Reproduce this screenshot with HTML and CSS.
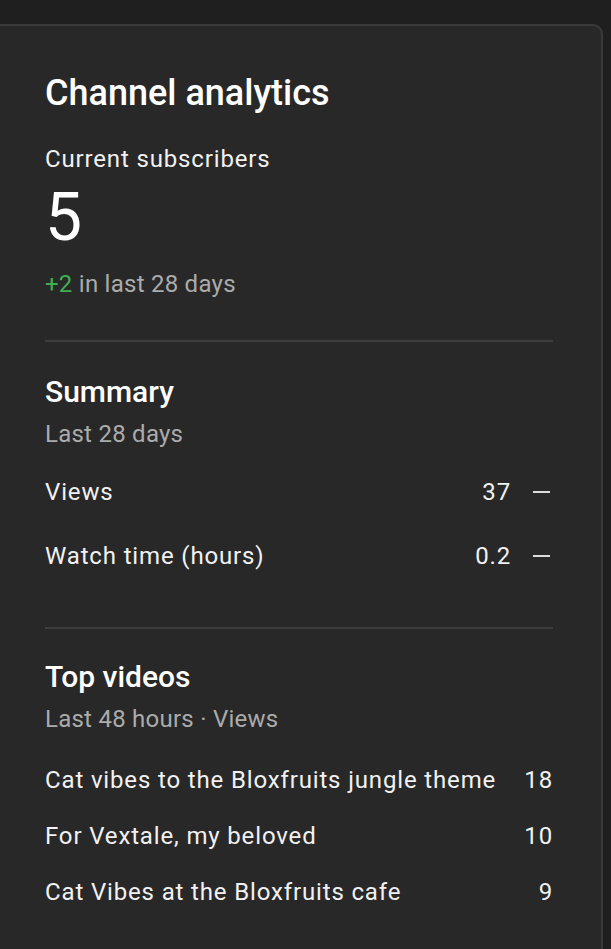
FILE: index.html
```html
<!DOCTYPE html>
<html lang="en">
<head>
  <meta charset="UTF-8" />
  <meta name="viewport" content="width=device-width, initial-scale=1.0"/>
  <title>Channel analytics</title>
  <link rel="stylesheet" href="styles.css">
</head>
<body>
  <div class="tarjeta">
    <h1>Channel analytics</h1>
    <div class="subs">
      <p class="etiqueta">Current subscribers</p>
      <p class="numero">5</p>
      <p class="gris"><span class="verde">+2</span> in last 28 days</p>
    </div>
    <hr>
    <div class="bloque">
      <h2>Summary</h2>
      <p class="gris sub">Last 28 days</p>
      <div class="metricas">
        <div class="fila"><span>Views</span><span class="valor">37<i class="tendencia"></i></span></div>
        <div class="fila"><span>Watch time (hours)</span><span class="valor">0.2<i class="tendencia"></i></span></div>
      </div>
    </div>
    <hr class="hr2">
    <div class="bloque">
      <h2>Top videos</h2>
      <p class="gris sub">Last 48 hours · Views</p>
      <div class="videos">
        <div class="fila"><span>Cat vibes to the Bloxfruits jungle theme</span><span>18</span></div>
        <div class="fila"><span>For Vextale, my beloved</span><span>10</span></div>
        <div class="fila"><span>Cat Vibes at the Bloxfruits cafe</span><span>9</span></div>
      </div>
    </div>
  </div>
</body>
</html>
```

FILE: styles.css
```css
body { margin: 0; background: #1f1f1f; font-family: Roboto, "Liberation Sans", Arial, sans-serif; color: #f1f1f1; }
p, h1, h2 { margin: 0; }
.tarjeta { margin: 24px 8px 0 -12px; padding: 45px 48px 60px 55px; background: #282828; border: 2px solid #3a3a3a; border-radius: 10px; min-height: 900px; box-sizing: border-box; }
h1 { font-size: 36px; line-height: 44px; font-weight: 500; color: #fff; }
h2 { font-size: 30px; line-height: 38px; font-weight: 500; color: #fff; }
.subs { margin-top: 28px; }
.etiqueta, .gris, .fila { font-size: 24px; line-height: 32px; letter-spacing: 0.85px; }
.numero { font-size: 66px; line-height: 72px; margin-top: 7px; color: #fff; }
.gris { color: #ababab; letter-spacing: 0.25px; }
.subs .gris { margin-top: 14px; }
.verde { color: #3fae52; }
hr { border: none; height: 2px; background: #3d3d3d; margin: 40px 0 0; }
.hr2 { margin-top: 55px; }
.bloque { margin-top: 31px; }
.hr2 + .bloque { margin-top: 29px; }
.sub { margin-top: 7px; }
.metricas { display: flex; flex-direction: column; gap: 32px; margin-top: 26px; }
.videos { display: flex; flex-direction: column; gap: 24px; margin-top: 29px; }
.fila { display: flex; justify-content: space-between; align-items: center; }
.valor { display: flex; align-items: center; }
.tendencia { display: inline-block; width: 17px; height: 2px; background: #dcdcdc; margin: 0 3px 0 22px; }
```
